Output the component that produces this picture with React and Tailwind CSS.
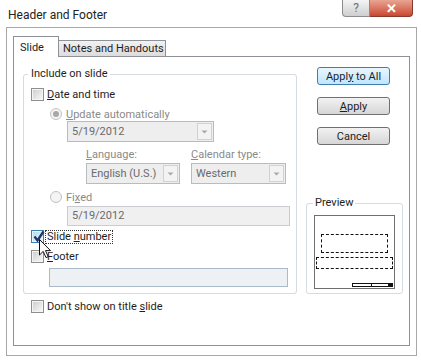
import React from "react";

function Check({ checked = false, hot = false }) {
  return (
    <span
      className={`relative flex h-[13px] w-[13px] shrink-0 items-center justify-center border ${
        hot ? "border-[#3c7fb1] bg-[#e8f4fc]" : "border-[#8f8f8f] bg-[#f4f4f4]"
      }`}
    >
      <span
        className={`h-[9px] w-[9px] ${
          hot ? "bg-gradient-to-br from-[#b9dcf4] to-[#e6f3fb]" : "bg-gradient-to-br from-[#d0d0d0] to-[#f6f6f6]"
        }`}
      />
      {checked && (
        <svg className="absolute left-[1px] top-[-1px]" width="12" height="13" viewBox="0 0 12 13">
          <path d="M1.5 6.5 L4.5 10.5 L10.5 1.5" fill="none" stroke="#21386b" strokeWidth="2.4" />
        </svg>
      )}
    </span>
  );
}

function Radio({ on = false }) {
  return (
    <span className="flex h-[12px] w-[12px] shrink-0 items-center justify-center rounded-full border border-[#c2c2c2] bg-[#f4f4f4]">
      {on && <span className="h-[6px] w-[6px] rounded-full bg-[#a8a8a8]" />}
    </span>
  );
}

function Combo({ value, className = "" }) {
  return (
    <div className={`flex h-[21px] items-stretch border border-[#b6bcc2] bg-[#eeeeee] ${className}`}>
      <span className="flex-1 whitespace-nowrap pl-[4px] leading-[19px] text-[#6a6a6a]">{value}</span>
      <span className="m-[1px] flex w-[15px] items-center justify-center border border-[#d2d2d2] bg-[#f3f3f3]">
        <svg width="7" height="4" viewBox="0 0 7 4">
          <path d="M0.5 0.5 L6.5 0.5 L3.5 3.5 Z" fill="#a9a9a9" />
        </svg>
      </span>
    </div>
  );
}

function Button({ children, primary = false }) {
  return (
    <div
      className={`flex h-[18px] w-[73px] items-center justify-center rounded-[3px] border leading-none ${
        primary
          ? "border-[#3c7fb1] bg-gradient-to-b from-[#eaf6fd] to-[#bee6fd]"
          : "border-[#707070] bg-gradient-to-b from-[#f2f2f2] to-[#d6d6d6]"
      }`}
    >
      {children}
    </div>
  );
}

export default function App() {
  return (
    <div className="relative h-[362px] w-[421px] overflow-hidden bg-white font-['Roboto',sans-serif] text-[11px] text-[#1e1e1e]">
      {/* title bar */}
      <div className="flex h-[27px] items-start justify-between">
        <span className="pl-[8px] pt-[7px] text-[12px] leading-[16px] text-[#222]">Header and Footer</span>
        <div className="mr-[8px] flex">
          <div className="flex h-[17px] w-[28px] items-center justify-center rounded-bl-[4px] border border-t-0 border-[#8d8d8d] bg-gradient-to-b from-[#f4f4f4] to-[#cfcfcf] text-[12px] leading-none text-[#6f6f6f]">
            ?
          </div>
          <div className="flex h-[17px] w-[43px] items-center justify-center rounded-br-[4px] border border-l-0 border-t-0 border-[#8a3a2c] bg-gradient-to-b from-[#e8a493] to-[#c9452f] text-[13px] font-bold leading-none text-white">
            ✕
          </div>
        </div>
      </div>

      {/* client frame */}
      <div className="ml-[6px] h-[329px] w-[411px] border border-[#a8a8a8] pl-[6px] pt-[8px]">
        {/* tabs */}
        <div className="relative z-10 flex h-[20px] items-end">
          <div className="-mb-[1px] flex h-[21px] w-[46px] items-start border border-b-0 border-[#8e9198] bg-white pl-[6px] pt-[3px] leading-[16px]">
            Slide
          </div>
          <div className="flex h-[16px] w-[107px] items-center whitespace-nowrap border border-b-0 border-l-0 border-[#8e9198] bg-gradient-to-b from-[#f2f2f2] to-[#dcdcdc] pl-[4px] leading-none">
            Notes and Handouts
          </div>
        </div>

        {/* tab page */}
        <div className="h-[290px] w-[397px] border border-[#8e9198] bg-white">
          <div className="flex">
            {/* Include on slide */}
            <div className="relative ml-[9px] mt-[17px] flex h-[220px] w-[274px] flex-col rounded-[3px] border border-[#d5dbe0]">
              <span className="absolute -top-[9px] left-[4px] bg-white px-[3px] leading-[16px]">Include on slide</span>

              <div className="ml-[7px] mt-[13px] flex h-[13px] items-center gap-[3px]">
                <Check />
                <span className="leading-none">
                  <u>D</u>ate and time
                </span>
              </div>

              <div className="ml-[26px] mt-[7px] flex h-[12px] items-center gap-[4px] text-[#8a8a8a]">
                <Radio on />
                <span className="leading-none">
                  <u>U</u>pdate automatically
                </span>
              </div>

              <Combo value="5/19/2012" className="ml-[43px] mt-[1px] w-[147px]" />

              <div className="ml-[62px] mt-[5px] flex h-[16px] leading-[16px] text-[#8a8a8a]">
                <span className="w-[105px]">
                  <u>L</u>anguage:
                </span>
                <span>
                  <u>C</u>alendar type:
                </span>
              </div>

              <div className="ml-[62px] flex gap-[11px]">
                <Combo value="English (U.S.)" className="w-[94px]" />
                <Combo value="Western" className="w-[95px]" />
              </div>

              <div className="ml-[26px] mt-[7px] flex h-[12px] items-center gap-[4px] text-[#8a8a8a]">
                <Radio />
                <span className="leading-none">
                  Fi<u>x</u>ed
                </span>
              </div>

              <div className="ml-[43px] mt-[3px] flex h-[20px] w-[223px] items-center border border-[#c9cdd1] bg-[#f0f0f0] pl-[4px] text-[#6a6a6a]">
                5/19/2012
              </div>

              <div className="ml-[7px] mt-[4px] flex h-[13px] items-center gap-[1px]">
                <Check checked hot />
                <span className="border border-dotted border-[#333] px-[1px] leading-[12px]">
                  Slide <u>n</u>umber
                </span>
              </div>

              <div className="ml-[7px] mt-[7px] flex h-[13px] items-center gap-[3px]">
                <Check />
                <span className="leading-none">
                  <u>F</u>ooter
                </span>
              </div>

              <div className="ml-[25px] mt-[5px] h-[19px] w-[239px] border border-[#abbacb] bg-[#eef1f4]" />
            </div>

            {/* right column */}
            <div className="ml-[9px] flex w-[97px] flex-col">
              <div className="ml-[11px] mt-[10px] flex flex-col gap-[12px]">
                <Button primary>
                  Appl<u>y</u>&nbsp;to All
                </Button>
                <Button>
                  <u>A</u>pply
                </Button>
                <Button>Cancel</Button>
              </div>

              <div className="relative mt-[58px] h-[91px] w-[97px] rounded-[3px] border border-[#d5dbe0]">
                <span className="absolute -top-[9px] left-[6px] bg-white px-[2px] leading-[16px]">Preview</span>
                <div className="ml-[7px] mt-[11px] flex h-[74px] w-[81px] flex-col border border-[#6f6f6f] bg-white">
                  <div className="ml-[6px] mt-[18px] h-[19px] w-[67px] border border-dashed border-[#111]" />
                  <div className="ml-[1px] mt-[4px] h-[12px] w-[77px] border border-dashed border-[#111]" />
                  <div className="ml-[37px] mt-[14px] flex h-[4px] w-[41px] border border-[#111]">
                    <span className="w-[19px] border-r border-[#111]" />
                    <span className="flex-1" />
                    <span className="w-[4px] bg-[#111]" />
                  </div>
                </div>
              </div>
            </div>
          </div>

          <div className="ml-[17px] mt-[6px] flex h-[13px] items-center gap-[3px]">
            <Check />
            <span className="leading-none">
              Don't show on title <u>s</u>lide
            </span>
          </div>
        </div>
      </div>

      {/* mouse pointer over the check box */}
      <svg className="absolute left-[39px] top-[239px]" width="13" height="20" viewBox="0 0 13 20">
        <path d="M0.5 0.5 L0.5 16 L4.2 12.4 L7 18.6 L9.2 17.6 L6.5 11.6 L11.5 11.6 Z" fill="#fff" stroke="#111" strokeWidth="1" />
      </svg>
    </div>
  );
}
